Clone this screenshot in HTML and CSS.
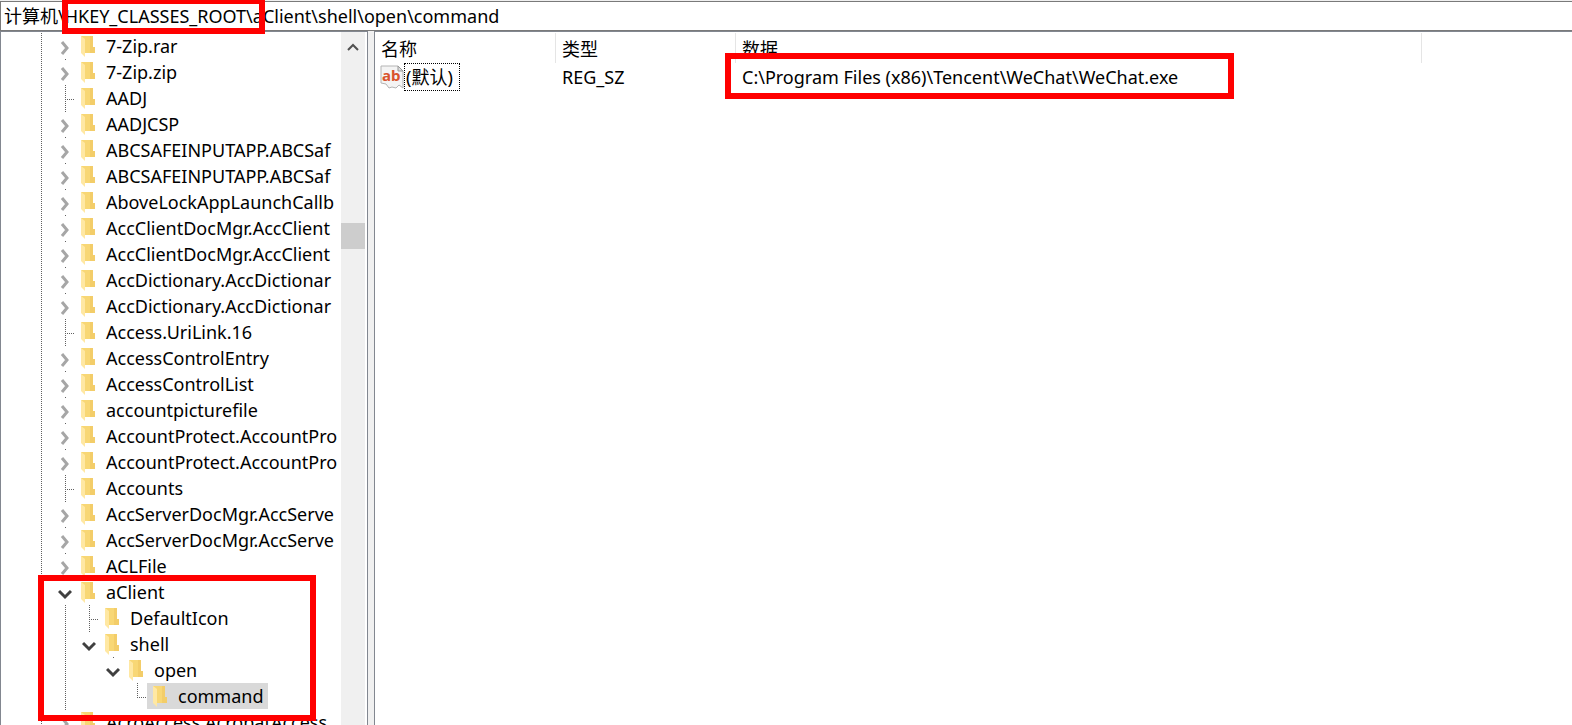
FILE: index.html
```
<!DOCTYPE html>
<html lang="zh-CN">

<head>
    <meta charset="UTF-8" />
    <meta name="viewport" content="width=device-width,initial-scale=1.0" />
    <title>注册表编辑器</title>
    <link rel="stylesheet" href="styles.css">
</head>

<body>
    <!-- shared icons -->
    <svg class="sprite" aria-hidden="true">
        <symbol id="folder" viewBox="0 0 16 22">
            <path d="M1 1h12v11h2v6H4z" fill="#f8d775" />
            <path d="M10 1h3v11h2v6h-5z" fill="#f3cd69" />
            <path d="M1 1l4 3v18l-4-4z" fill="#ffe8a3" />
        </symbol>
        <symbol id="closed" viewBox="0 0 14 14">
            <path d="M4 1l5 6-5 6" fill="none" stroke="#a6a6a6" stroke-width="3" />
        </symbol>
        <symbol id="opened" viewBox="0 0 14 14">
            <path d="M1 4l6 6 6-6" fill="none" stroke="#404040" stroke-width="3" />
        </symbol>
    </svg>

    <input class="address" type="text" aria-label="地址" value="计算机\HKEY_CLASSES_ROOT\aClient\shell\open\command" />

    <div class="panes">
        <div class="tree-pane">
            <ul class="tree" id="tree"></ul>
            <div class="scrollbar">
                <button class="scroll-up" aria-label="向上滚动">
                    <svg viewBox="0 0 12 10"><path d="M1 8l5-5 5 5" fill="none" stroke="#505050" stroke-width="2" /></svg>
                </button>
                <div class="scroll-thumb"></div>
            </div>
        </div>

        <div class="value-pane">
            <table class="values">
                <thead>
                    <tr>
                        <th class="col-name">名称</th>
                        <th class="col-type">类型</th>
                        <th class="col-data">数据</th>
                        <td></td>
                    </tr>
                </thead>
                <tbody>
                    <tr>
                        <td class="name-cell">
                            <div class="value-name">
                                <svg class="string-icon" viewBox="0 0 24 24">
                                    <path d="M1 1h17l5 5v17l-4-3-3 3-4-1-3 1-3-4-5-1z" fill="#f4f4f4" stroke="#b4b4b4" />
                                    <path d="M18 1v5h5z" fill="#ddd" stroke="#999" />
                                    <text x="2" y="16">ab</text>
                                </svg>
                                <span class="focused">(默认)</span>
                            </div>
                        </td>
                        <td>REG_SZ</td>
                        <td>C:\Program Files (x86)\Tencent\WeChat\WeChat.exe</td>
                        <td></td>
                    </tr>
                </tbody>
            </table>
        </div>
    </div>

    <div class="mark mark-root"></div>
    <div class="mark mark-keys"></div>
    <div class="mark mark-data"></div>

    <script src="tree.js"></script>
</body>

</html>
```
FILE: styles.css
```
* {
    box-sizing: border-box;
}

body {
    margin: 0;
    height: 100vh;
    display: flex;
    flex-direction: column;
    overflow: hidden;
    position: relative;
    padding-top: 1px;
    background: #f0f0f0;
    color: #000;
    font-family: "Noto Sans", "Noto Sans CJK SC", sans-serif;
    font-size: 18px;
}

button {
    border: none;
    background: transparent;
    padding: 0;
    font: inherit;
}

.sprite {
    display: none;
}

.address {
    flex: none;
    width: 100%;
    height: 30px;
    border: 1px solid #7a7a7a;
    border-right: none;
    padding: 0 3px 2px;
    background: #fff;
    color: #000;
    font: inherit;
    outline: none;
}

.panes {
    flex: 1;
    min-height: 0;
    display: flex;
    gap: 6px;
}

.tree-pane {
    flex: none;
    width: 368px;
    display: flex;
    border: 1px solid #828790;
    border-bottom: none;
    padding-right: 2px;
    background: #fff;
}

/* key tree */
.tree {
    flex: 1;
    min-width: 0;
    margin: 0;
    padding: 1px 0 0 40px;
    list-style: none;
    overflow: hidden;
}

.row {
    display: flex;
    height: 26px;
    white-space: nowrap;
    background: repeating-linear-gradient(#606060 0 1px, #fff 1px 2px) left / 1px 100% no-repeat;
}

.row.nested {
    background:
        repeating-linear-gradient(#606060 0 1px, #fff 1px 2px) left / 1px 100% no-repeat,
        repeating-linear-gradient(#606060 0 1px, #fff 1px 2px) 24px 0 / 1px 100% no-repeat;
}

.guide {
    flex: none;
    width: 24px;
}

.toggle {
    flex: none;
    width: 19px;
    margin-left: 15px;
    height: 26px;
    background: linear-gradient(#606060, #606060) 9px 0 / 1px 1px no-repeat;
}

.toggle svg {
    display: block;
    width: 14px;
    height: 14px;
    margin: 4px 0 0 2px;
}

.toggle.first {
    background: none;
}

.leaf {
    background:
        repeating-linear-gradient(#606060 0 1px, #fff 1px 2px) 9px 0 / 1px 100% no-repeat,
        repeating-linear-gradient(90deg, #606060 0 1px, #fff 1px 2px) 9px 14px / 11px 1px no-repeat;
}

.leaf.last {
    background-size: 1px 14px, 11px 1px;
}

.key {
    display: flex;
    align-items: center;
    height: 26px;
    padding: 0 5px;
    color: #000;
    text-decoration: none;
}

.key svg {
    flex: none;
    width: 16px;
    height: 22px;
    margin-right: 10px;
}

.key.selected {
    background: #d9d9d9;
}

.scrollbar {
    flex: none;
    width: 24px;
    background: #f0f0f0;
}

.scroll-up {
    display: block;
    width: 24px;
    height: 32px;
}

.scroll-up svg {
    display: block;
    width: 12px;
    height: 10px;
    margin: 0 auto 2px;
}

.scroll-thumb {
    height: 26px;
    margin-top: 159px;
    background: #cdcdcd;
}

/* value list */
.value-pane {
    flex: 1;
    min-width: 0;
    border: 1px solid #828790;
    border-right: none;
    border-bottom: none;
    background: #fff;
}

.values {
    width: 100%;
    margin-top: 1px;
    table-layout: fixed;
    border-collapse: separate;
    border-spacing: 0;
}

.values th {
    height: 30px;
    padding: 0 6px;
    border-right: 1px solid #e5e5e5;
    font-weight: normal;
    text-align: left;
}

.values td {
    height: 28px;
    padding: 0 6px;
    white-space: nowrap;
}

.col-name {
    width: 181px;
}

.col-type {
    width: 180px;
}

.col-data {
    width: 686px;
}

.values .name-cell {
    padding: 0 5px;
}

.value-name {
    display: flex;
    align-items: center;
}

.string-icon {
    width: 24px;
    height: 24px;
}

.string-icon text {
    font: bold 15px "Noto Sans", sans-serif;
    fill: #d9532c;
}

.focused {
    border: 1px dotted #000;
    height: 28px;
    line-height: 26px;
    padding: 0 6px 0 1px;
}

/* red highlight frames */
.mark {
    position: absolute;
    border: 6px solid #f00;
    pointer-events: none;
}

.mark-root {
    left: 62px;
    top: 0;
    width: 203px;
    height: 34px;
    border-top-width: 4px;
}

.mark-keys {
    left: 38px;
    top: 575px;
    width: 278px;
    height: 146px;
}

.mark-data {
    left: 725px;
    top: 53px;
    width: 509px;
    height: 46px;
}
```
FILE: tree.js
```
// [name, depth, state]
const KEYS = [
    ["7-Zip.rar", 0, "closed"],
    ["7-Zip.zip", 0, "closed"],
    ["AADJ", 0, "leaf"],
    ["AADJCSP", 0, "closed"],
    ["ABCSAFEINPUTAPP.ABCSaf", 0, "closed"],
    ["ABCSAFEINPUTAPP.ABCSaf", 0, "closed"],
    ["AboveLockAppLaunchCallb", 0, "closed"],
    ["AccClientDocMgr.AccClient", 0, "closed"],
    ["AccClientDocMgr.AccClient", 0, "closed"],
    ["AccDictionary.AccDictionar", 0, "closed"],
    ["AccDictionary.AccDictionar", 0, "closed"],
    ["Access.UriLink.16", 0, "leaf"],
    ["AccessControlEntry", 0, "closed"],
    ["AccessControlList", 0, "closed"],
    ["accountpicturefile", 0, "closed"],
    ["AccountProtect.AccountPro", 0, "closed"],
    ["AccountProtect.AccountPro", 0, "closed"],
    ["Accounts", 0, "leaf"],
    ["AccServerDocMgr.AccServe", 0, "closed"],
    ["AccServerDocMgr.AccServe", 0, "closed"],
    ["ACLFile", 0, "closed"],
    ["aClient", 0, "opened"],
    ["DefaultIcon", 1, "leaf"],
    ["shell", 1, "opened"],
    ["open", 2, "opened"],
    ["command", 3, "leaf last"],
    ["AcroAccess.AcrobatAccess", 0, "closed"]
];

const tree = document.getElementById("tree");

KEYS.forEach(function ([name, depth, state], i) {
    let html = '<span class="guide"></span>'.repeat(depth);
    if (state.startsWith("leaf")) {
        html += '<span class="toggle ' + state + '"></span>';
    } else {
        html += '<button class="toggle' + (i === 0 ? " first" : "") + '" aria-label="' + name + '"><svg><use href="#' + state + '"/></svg></button>';
    }
    html += '<a class="key' + (name === "command" ? " selected" : "") + '" href="#"><svg><use href="#folder"/></svg>' + name + '</a>';

    const row = document.createElement("li");
    row.className = depth > 0 ? "row nested" : "row";
    row.innerHTML = html;
    tree.appendChild(row);
});
```
